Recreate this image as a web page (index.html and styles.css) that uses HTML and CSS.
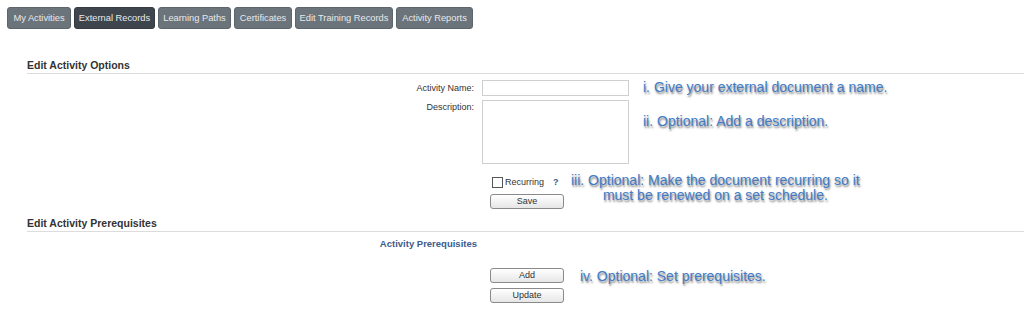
FILE: index.html
```html
<!DOCTYPE html>
<html>
<head>
<meta charset="utf-8">
<link rel="stylesheet" href="styles.css">
</head>
<body>
<div class="page">
  <nav class="tabs">
    <span class="tab w1">My Activities</span>
    <span class="tab w2 active">External Records</span>
    <span class="tab w3">Learning Paths</span>
    <span class="tab w4">Certificates</span>
    <span class="tab w5">Edit Training Records</span>
    <span class="tab w6">Activity Reports</span>
  </nav>

  <section class="panel first">
    <h2 class="panel-title">Edit Activity Options</h2>
    <div class="form">
      <label class="lbl">Activity Name:</label>
      <div class="field"><input class="text-input" type="text"></div>
      <label class="lbl lbl-top">Description:</label>
      <div class="field"><textarea class="text-area"></textarea></div>
      <div></div>
      <div class="field actions">
        <div class="recurring">
          <input class="check" type="checkbox">
          <span class="rec-label">Recurring</span>
          <span class="help">?</span>
        </div>
        <button class="btn">Save</button>
      </div>
    </div>
  </section>

  <section class="panel second">
    <h2 class="panel-title">Edit Activity Prerequisites</h2>
    <div class="form">
      <div class="lbl prereq">Activity Prerequisites</div>
      <div></div>
      <div></div>
      <div class="field buttons">
        <button class="btn">Add</button>
        <button class="btn">Update</button>
      </div>
    </div>
  </section>

  <div class="note n1">i. Give your external document a name.</div>
  <div class="note n2">ii. Optional: Add a description.</div>
  <div class="note n3">iii. Optional: Make the document recurring so it<br>must be renewed on a set schedule.</div>
  <div class="note n4">iv. Optional: Set prerequisites.</div>
</div>
</body>
</html>
```

FILE: styles.css
```css
html, body {
  margin: 0;
  padding: 0;
  background: #ffffff;
}
body {
  font-family: "Liberation Sans", Arial, sans-serif;
  color: #222;
}
.page {
  position: relative;
  width: 1024px;
  height: 313px;
  overflow: hidden;
}
.tabs {
  display: flex;
  gap: 3px;
  padding: 7px 0 0 7px;
}
.tab {
  box-sizing: border-box;
  height: 22px;
  line-height: 20px;
  border: 1px solid #5d656d;
  border-radius: 3px;
  background: #6b737b;
  color: #e8eaec;
  font-size: 9.3px;
  text-align: center;
  white-space: nowrap;
}
.tab.active {
  background: #3e454c;
  border-color: #353b41;
}
.w1 { width: 64px; }
.w2 { width: 81px; }
.w3 { width: 73px; }
.w4 { width: 58px; }
.w5 { width: 98px; }
.w6 { width: 77px; }

.panel {
  margin-left: 27px;
}
.panel.first { margin-top: 29px; }
.panel.second { margin-top: 7px; }
.panel-title {
  margin: 0;
  font-size: 10.5px;
  font-weight: bold;
  line-height: 14px;
  padding-bottom: 1px;
  color: #333;
  border-bottom: 1px solid #dcdcdc;
}
.form {
  display: grid;
  grid-template-columns: 447px 1fr;
  column-gap: 8px;
  row-gap: 4px;
  margin-top: 6px;
}
.second .form { margin-top: 5px; row-gap: 17px; }
.lbl {
  font-size: 9px;
  color: #333;
  text-align: right;
  line-height: 16px;
}
.lbl-top { line-height: 14px; }
.prereq {
  font-weight: bold;
  font-size: 9.5px;
  color: #3d5b8c;
  line-height: 14px;
  margin-right: -3px;
}
.field { display: flex; flex-direction: column; }
.text-input {
  box-sizing: border-box;
  width: 147px;
  height: 16px;
  margin: 0;
  border: 1px solid #cfcfcf;
  padding: 0 2px;
}
.text-area {
  box-sizing: border-box;
  width: 147px;
  height: 64px;
  margin: 0;
  border: 1px solid #cfcfcf;
  resize: none;
  padding: 0;
}
.actions {
  padding-left: 8px;
  padding-top: 7px;
  gap: 5px;
}
.recurring {
  display: flex;
  align-items: center;
  height: 14px;
  padding-left: 2px;
}
.check {
  appearance: none;
  -webkit-appearance: none;
  box-sizing: border-box;
  width: 11px;
  height: 11px;
  margin: 0 2px 0 0;
  border: 1px solid #555;
  background: #fff;
}
.rec-label {
  font-size: 9px;
  color: #333;
}
.help {
  font-size: 9px;
  font-weight: bold;
  color: #3d5b8c;
  margin-left: 9px;
}
.btn {
  box-sizing: border-box;
  width: 74px;
  height: 15px;
  margin: 0;
  padding: 0;
  border: 1px solid #8a8a8a;
  border-radius: 3px;
  background: linear-gradient(#ffffff, #e6e6e6);
  font-family: "Liberation Sans", Arial, sans-serif;
  font-size: 9px;
  line-height: 13px;
  color: #333;
}
.buttons {
  padding-left: 8px;
  gap: 5px;
}
.note {
  position: absolute;
  font-family: "Liberation Sans", Arial, sans-serif;
  font-size: 14px;
  line-height: 16px;
  color: #437bc6;
  text-shadow: 1px 2px 2px rgba(0, 0, 0, 0.5);
  white-space: nowrap;
}
.n1 { left: 643px; top: 79px; }
.n2 { left: 643px; top: 113px; }
.n3 { left: 571px; top: 173px; text-align: center; line-height: 15px; }
.n4 { left: 580px; top: 268px; }
```
